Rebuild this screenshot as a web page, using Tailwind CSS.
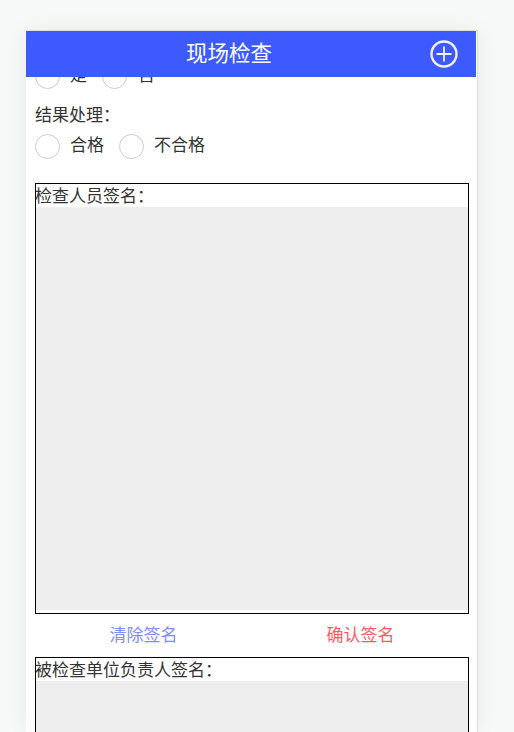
<!DOCTYPE html>
<html lang="zh-CN">
<head>
    <meta charset="UTF-8">
    <meta name="viewport" content="width=device-width, initial-scale=1.0">
    <title>现场检查</title>
    <script src="https://cdn.jsdelivr.net/npm/@tailwindcss/browser@4"></script>
</head>
<body class="bg-[#f7f9f9] h-[732px] overflow-hidden font-['Liberation_Sans','Noto_Sans_CJK_SC',sans-serif] text-[17px] text-[#333]">
    <div class="ml-[26px] mt-[30px] w-[452px] h-[702px] bg-white border-t border-r border-[#ddd] shadow-[0_0_20px_rgba(0,0,0,0.06)] flex flex-col overflow-hidden">
        <!-- Header -->
        <div class="h-[46px] w-[450px] shrink-0 bg-[#3c5afe] relative flex items-center justify-center pr-[44px] pt-[1px] z-10">
            <span class="text-[21.5px] text-white">现场检查</span>
            <svg class="absolute right-[18px] top-[9px] w-[28px] h-[28px]" viewBox="0 0 28 28" fill="none" stroke="#f0f2ff">
                <circle cx="14" cy="14" r="12.5" stroke-width="2.4"/>
                <path d="M14 6.5V21.5M6.5 14H21.5" stroke-width="1.8"/>
            </svg>
        </div>

        <!-- Form -->
        <div class="px-[9px] flex-1">
            <div class="flex items-center h-[26px] -mt-[14px] leading-[26px]">
                <span class="w-[25px] h-[25px] rounded-full border border-[#ccc]"></span>
                <span class="ml-[10px] -mt-[1px]">是</span>
                <span class="ml-[15px] w-[25px] h-[25px] rounded-full border border-[#ccc]"></span>
                <span class="ml-[11px] -mt-[1px]">否</span>
            </div>
            <div class="mt-[14px] leading-[24px] h-[24px] pt-[1px]">结果处理：</div>
            <div class="flex items-center h-[26px] mt-[6px] leading-[26px]">
                <span class="w-[25px] h-[25px] rounded-full border border-[#ccc]"></span>
                <span class="ml-[10px]">合格</span>
                <span class="ml-[15px] w-[25px] h-[25px] rounded-full border border-[#ccc]"></span>
                <span class="ml-[10px]">不合格</span>
            </div>

            <!-- Inspector signature -->
            <div class="mt-[24px] w-[434px] h-[431px] border border-black flex flex-col">
                <div class="h-[23px] leading-[25px] -ml-[1px] shrink-0">检查人员签名：</div>
                <div class="h-[403px] bg-[#eee]"></div>
            </div>
            <div class="grid grid-cols-2 w-[434px] h-[43px] items-center text-center">
                <span class="text-[#7f8dff]">清除签名</span>
                <span class="text-[#ff5a5f]">确认签名</span>
            </div>

            <!-- Inspected unit signature -->
            <div class="w-[434px] h-[431px] border border-black flex flex-col">
                <div class="h-[23px] leading-[25px] -ml-[1px] shrink-0">被检查单位负责人签名：</div>
                <div class="h-[403px] bg-[#eee]"></div>
            </div>
        </div>
    </div>
</body>
</html>
